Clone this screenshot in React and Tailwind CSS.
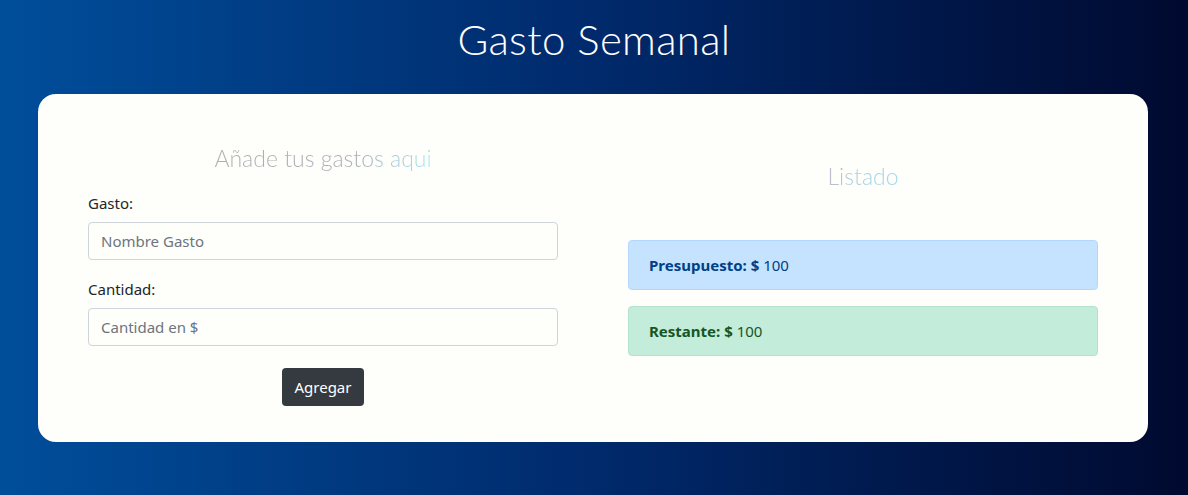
export default function App() {
  return (
    <div className="min-h-[495px] bg-gradient-to-r from-[#004e9b] via-[#002a6c] to-[#000a30] pb-[53px] font-['Noto_Sans',sans-serif]">
      <h1 className="pt-[13px] pb-[29px] text-center font-['Lato',sans-serif] text-[42px] leading-[52px] font-light tracking-[0.3px] text-white">
        Gasto Semanal
      </h1>

      <main className="ml-[38px] grid w-[1110px] grid-cols-2 gap-[70px] rounded-[18px] bg-[#fefefb] px-[50px] pt-[50px] pb-[36px]">
        <section className="flex flex-col">
          <h2 className="text-center font-['Lato',sans-serif] text-[23px] leading-[29px] font-light">
            <span className="bg-gradient-to-r from-[#b0b0b0] via-[#a8acb8] via-65% to-[#a6e6f4] bg-clip-text text-transparent">
              Añade tus gastos aqui
            </span>
          </h2>

          <label className="mt-[18px] text-[15px] leading-[24px] text-[#212529]">Gasto:</label>
          <input
            type="text"
            placeholder="Nombre Gasto"
            className="mt-[7px] h-[38px] rounded-[4px] border border-[#ced4da] bg-[#fefefb] px-[12px] text-[15px] placeholder:text-[#6c757d]"
          />

          <label className="mt-[17px] text-[15px] leading-[24px] text-[#212529]">Cantidad:</label>
          <input
            type="text"
            placeholder="Cantidad en $"
            className="mt-[7px] h-[38px] rounded-[4px] border border-[#ced4da] bg-[#fefefb] px-[12px] text-[15px] placeholder:text-[#6c757d]"
          />

          <div className="mt-[22px] flex justify-center">
            <button className="h-[38px] rounded-[4px] bg-[#343a40] px-[12px] text-[15px] text-white">Agregar</button>
          </div>
        </section>

        <section className="flex flex-col">
          <h2 className="mt-[18px] text-center font-['Lato',sans-serif] text-[23px] leading-[29px] font-light">
            <span className="bg-gradient-to-r from-[#c4b8c8] via-[#a8cde0] via-40% to-[#9ad8ee] bg-clip-text text-transparent">Listado</span>
          </h2>

          <div className="mt-[49px] flex flex-col gap-[16px]">
            <div className="h-[50px] rounded-[4px] border border-[#b3d7ff] bg-[#c5e3ff] px-[20px] text-[15px] leading-[48px] text-[#004085]">
              <strong className="font-bold">Presupuesto: $</strong> 100
            </div>
            <div className="h-[50px] rounded-[4px] border border-[#b2e4cc] bg-[#c3ecda] px-[20px] text-[15px] leading-[48px] text-[#155724]">
              <strong className="font-bold">Restante: $</strong> 100
            </div>
          </div>
        </section>
      </main>
    </div>
  )
}
